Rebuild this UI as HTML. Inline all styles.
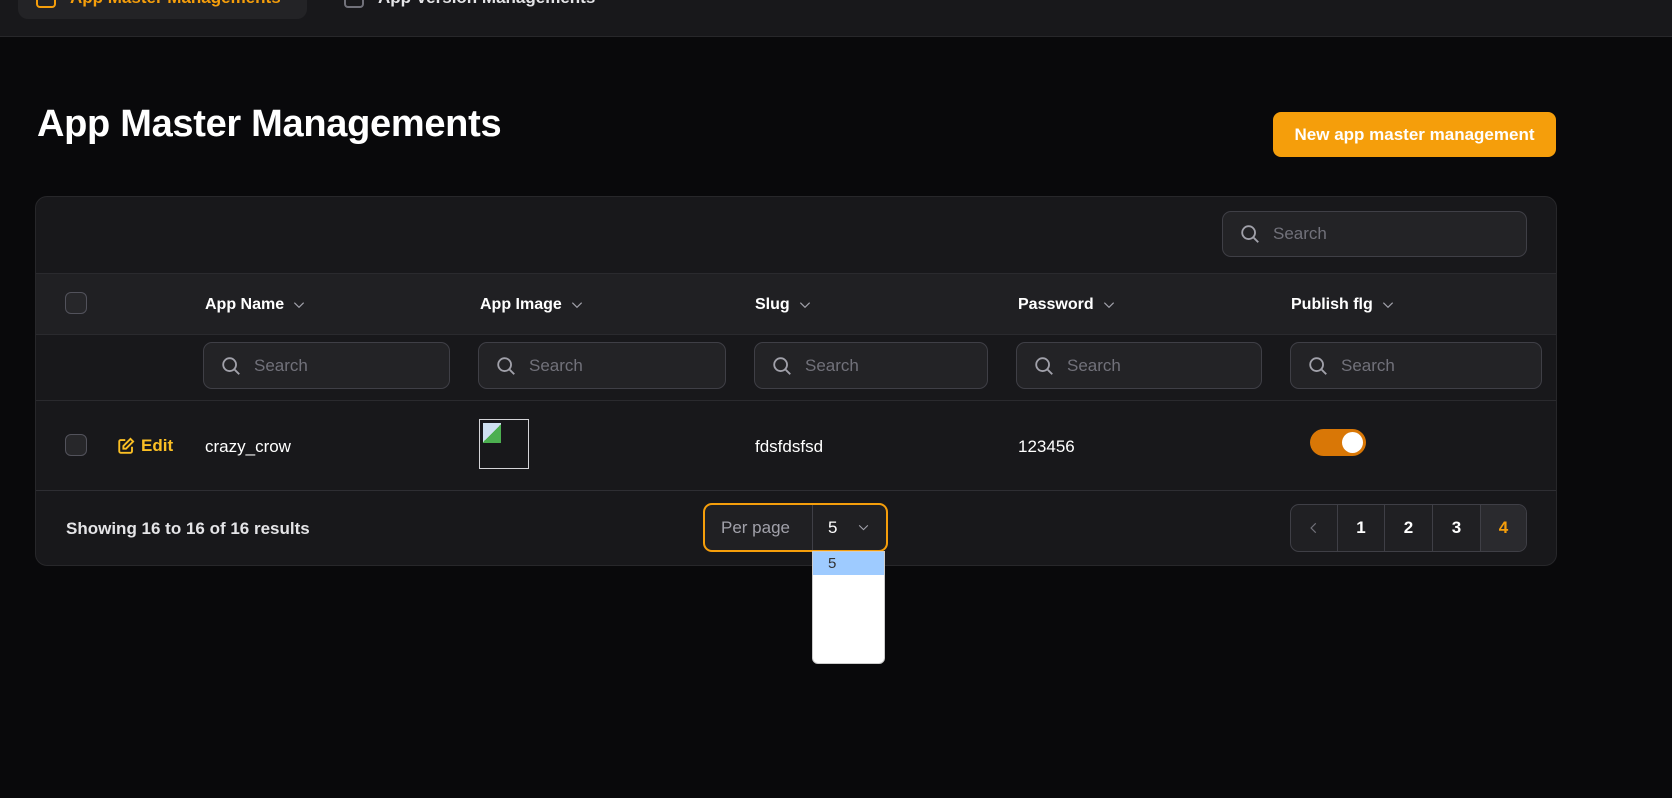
<!DOCTYPE html>
<html><head><meta charset="utf-8"><style>
*{box-sizing:border-box;margin:0;padding:0}
body{width:1672px;height:798px;background:#09090b;font-family:"Liberation Sans",sans-serif;color:#fff;position:relative;overflow:hidden}
.abs{position:absolute}
.topbar{left:0;top:0;width:1672px;height:37px;background:#18181b;border-bottom:1px solid #27272a}
.tabbg{top:-20px;height:39px;border-radius:0 0 10px 10px}
.tabt{top:-12px;font-size:17px;font-weight:bold;display:flex;align-items:flex-end;white-space:nowrap}
.cb{width:22px;height:22px;border:1.5px solid #52525b;border-radius:6px;background:#27272a}
.search{border:1px solid #3f3f46;border-radius:9px;background:#232326;display:flex;align-items:center;padding-left:16px;color:#71717a;font-size:17px}
.search svg{margin-right:12px}
.th{font-size:16px;font-weight:bold;top:296px;display:flex;align-items:center}
.th svg{margin-left:8px}
.td{font-size:17px;top:437px}
</style></head><body>
<div class="abs topbar"></div>
<div class="abs tabbg" style="left:18px;width:289px;background:#232326"></div>
<div class="abs tabt" style="left:36px;color:#f59e0b">
<span style="display:inline-block;width:20px;height:20px;border:2px solid #f59e0b;border-radius:4px;margin-right:14px"></span>App Master Managements</div>
<div class="abs tabt" style="left:344px;color:#e4e4e7">
<span style="display:inline-block;width:20px;height:20px;border:2px solid #71717a;border-radius:4px;margin-right:14px"></span>App Version Managements</div>

<div class="abs" style="left:37px;top:103px;font-size:38px;font-weight:bold;letter-spacing:-0.3px">App Master Managements</div>
<div class="abs" style="left:1273px;top:112px;width:283px;height:45px;background:#f59e0b;border-radius:8px;font-size:17px;font-weight:bold;display:flex;align-items:center;justify-content:center">New app master management</div>

<div class="abs" style="left:35px;top:196px;width:1522px;height:370px;background:#18181b;border:1px solid #27272a;border-radius:12px;overflow:hidden">
 <div class="abs" style="left:0;top:76px;width:100%;height:62px;background:#202023;border-top:1px solid #2a2a2e;border-bottom:1px solid #2a2a2e"></div>
 <div class="abs" style="left:0;top:203px;width:100%;height:1px;background:#2a2a2e"></div>
 <div class="abs" style="left:0;top:293px;width:100%;height:1px;background:#2e2e33"></div>
</div>

<div class="abs search" style="left:1222px;top:211px;width:305px;height:46px"><svg width="22" height="22" viewBox="0 0 24 24" fill="none" stroke="#a1a1aa" stroke-width="2"><circle cx="10.5" cy="10.5" r="7"/><path d="M16 16l5 5"/></svg>Search</div>

<div class="abs cb" style="left:65px;top:292px"></div>
<div class="abs th" style="left:205px">App Name <svg width="14" height="14" viewBox="0 0 24 24" fill="none" stroke="#a1a1aa" stroke-width="2"><path d="M4 8l8 8 8-8"/></svg></div>
<div class="abs th" style="left:480px">App Image <svg width="14" height="14" viewBox="0 0 24 24" fill="none" stroke="#a1a1aa" stroke-width="2"><path d="M4 8l8 8 8-8"/></svg></div>
<div class="abs th" style="left:755px">Slug <svg width="14" height="14" viewBox="0 0 24 24" fill="none" stroke="#a1a1aa" stroke-width="2"><path d="M4 8l8 8 8-8"/></svg></div>
<div class="abs th" style="left:1018px">Password <svg width="14" height="14" viewBox="0 0 24 24" fill="none" stroke="#a1a1aa" stroke-width="2"><path d="M4 8l8 8 8-8"/></svg></div>
<div class="abs th" style="left:1291px">Publish flg <svg width="14" height="14" viewBox="0 0 24 24" fill="none" stroke="#a1a1aa" stroke-width="2"><path d="M4 8l8 8 8-8"/></svg></div>

<div class="abs search" style="left:203px;top:342px;width:247px;height:47px"><svg width="22" height="22" viewBox="0 0 24 24" fill="none" stroke="#a1a1aa" stroke-width="2"><circle cx="10.5" cy="10.5" r="7"/><path d="M16 16l5 5"/></svg>Search</div>
<div class="abs search" style="left:478px;top:342px;width:248px;height:47px"><svg width="22" height="22" viewBox="0 0 24 24" fill="none" stroke="#a1a1aa" stroke-width="2"><circle cx="10.5" cy="10.5" r="7"/><path d="M16 16l5 5"/></svg>Search</div>
<div class="abs search" style="left:754px;top:342px;width:234px;height:47px"><svg width="22" height="22" viewBox="0 0 24 24" fill="none" stroke="#a1a1aa" stroke-width="2"><circle cx="10.5" cy="10.5" r="7"/><path d="M16 16l5 5"/></svg>Search</div>
<div class="abs search" style="left:1016px;top:342px;width:246px;height:47px"><svg width="22" height="22" viewBox="0 0 24 24" fill="none" stroke="#a1a1aa" stroke-width="2"><circle cx="10.5" cy="10.5" r="7"/><path d="M16 16l5 5"/></svg>Search</div>
<div class="abs search" style="left:1290px;top:342px;width:252px;height:47px"><svg width="22" height="22" viewBox="0 0 24 24" fill="none" stroke="#a1a1aa" stroke-width="2"><circle cx="10.5" cy="10.5" r="7"/><path d="M16 16l5 5"/></svg>Search</div>

<div class="abs cb" style="left:65px;top:434px"></div>
<div class="abs" style="left:117px;top:436px;display:flex;align-items:center;color:#fbbf24;font-weight:bold;font-size:17px"><svg width="18" height="18" viewBox="0 0 24 24" fill="none" stroke="#fbbf24" stroke-width="2.5"><path d="M11 4H5a2 2 0 0 0-2 2v13a2 2 0 0 0 2 2h13a2 2 0 0 0 2-2v-6"/><path d="M18 2.5l3.5 3.5L12 15.5H8.5V12z"/></svg><span style="margin-left:6px">Edit</span></div>
<div class="abs td" style="left:205px">crazy_crow</div>
<div class="abs" style="left:479px;top:419px;width:50px;height:50px;border:1px solid #d4d4d8"><div style="margin:3px;width:18px;height:20px;background:linear-gradient(135deg,#cfe0f0 50%,#4caf50 50%)"></div></div>
<div class="abs td" style="left:755px">fdsfdsfsd</div>
<div class="abs td" style="left:1018px">123456</div>
<div class="abs" style="left:1310px;top:429px;width:56px;height:27px;border-radius:14px;background:#d97706"><div style="position:absolute;right:3px;top:3px;width:21px;height:21px;border-radius:50%;background:#fff"></div></div>

<div class="abs" style="left:66px;top:519px;font-size:17px;font-weight:bold;color:#e4e4e7">Showing 16 to 16 of 16 results</div>
<div class="abs" style="left:703px;top:503px;width:185px;height:49px;border:2px solid #f59e0b;border-radius:9px;background:#202023;display:flex;align-items:center;font-size:17px">
 <span style="color:#a1a1aa;padding-left:16px;width:107px">Per page</span>
 <span style="border-left:1px solid #3f3f46;height:100%;display:flex;align-items:center;padding-left:15px;flex:1">5<svg style="margin-left:20px" width="13" height="13" viewBox="0 0 24 24" fill="none" stroke="#a1a1aa" stroke-width="2"><path d="M4 8l8 8 8-8"/></svg></span>
</div>
<div class="abs" style="left:812px;top:551px;width:73px;height:113px;background:#fff;border-radius:0 0 6px 6px;border:1px solid #ccc;overflow:hidden"><div style="background:#9ecbff;height:23px;color:#333;font-size:15px;padding-left:15px;line-height:23px">5</div></div>

<div class="abs" style="left:1290px;top:504px;width:237px;height:48px;border:1px solid #3f3f46;border-radius:9px;background:#202023;display:flex;overflow:hidden;font-size:17px;font-weight:bold">
 <div style="width:47px;display:flex;align-items:center;justify-content:center;border-right:1px solid #3f3f46"><svg width="14" height="14" viewBox="0 0 24 24" fill="none" stroke="#71717a" stroke-width="2"><path d="M15 4l-8 8 8 8"/></svg></div>
 <div style="width:47px;display:flex;align-items:center;justify-content:center;border-right:1px solid #3f3f46">1</div>
 <div style="width:48px;display:flex;align-items:center;justify-content:center;border-right:1px solid #3f3f46">2</div>
 <div style="width:48px;display:flex;align-items:center;justify-content:center;border-right:1px solid #3f3f46">3</div>
 <div style="flex:1;display:flex;align-items:center;justify-content:center;background:#2a2a2e;color:#f59e0b">4</div>
</div>
</body></html>
